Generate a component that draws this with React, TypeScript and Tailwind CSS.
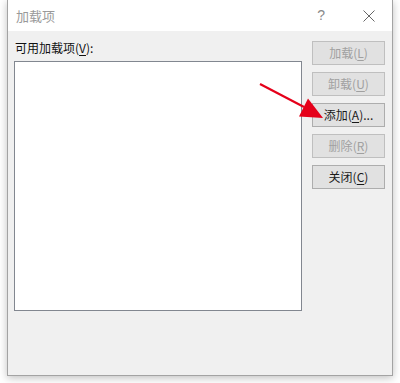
import React from 'react';

const font = { fontFamily: '"Microsoft YaHei", "Noto Sans CJK SC", "Noto Sans", sans-serif' };

const Btn = ({ label, k, rest = '', disabled = false }: { label: string; k: string; rest?: string; disabled?: boolean }) => (
  <button
    className={`h-[24px] w-[73px] border border-[#adadad] bg-[#e1e1e1] text-[12px] leading-none flex items-center justify-center ${disabled ? 'text-[#a0a0a0] border-[#bfbfbf]' : 'text-[#1a1a1a]'}`}
  >
    {label}(<span className="underline underline-offset-2">{k}</span>){rest}
  </button>
);

const App = () => {
  return (
    <div className="relative w-[400px] h-[383px] bg-white overflow-hidden" style={font}>
      <div className="ml-[7px] w-[386px] h-[376px] flex flex-col border-l border-r border-b border-[#a3a3a3] shadow-[0_2px_8px_rgba(0,0,0,0.25)]">
        {/* title bar */}
        <div className="h-[31px] bg-white flex items-center pl-[8px] pr-[17px]">
          <span className="text-[13px] text-[#999999]">加载项</span>
          <span className="ml-auto mr-[38px] text-[14px] text-[#8a8a8a]" style={{ fontFamily: '"Liberation Sans", sans-serif' }}>?</span>
          <svg width="12" height="12" viewBox="0 0 12 12" className="text-[#666]">
            <path d="M0.5 0.5 L11.5 11.5 M11.5 0.5 L0.5 11.5" stroke="currentColor" strokeWidth="1" fill="none" />
          </svg>
        </div>
        {/* body */}
        <div className="flex-1 bg-[#f0f0f0] flex pl-[6px]">
          <div className="flex flex-col">
            <div className="mt-[9px] h-[16px] leading-[16px] pl-[1px] text-[12px] text-[#111]">
              可用加载项(<span className="underline underline-offset-2">V</span>):
            </div>
            <div className="mt-[5px] w-[288px] h-[250px] bg-white border border-[#828790]" />
          </div>
          <div className="ml-[10px] mt-[10px] flex flex-col gap-[7px]">
            <Btn label="加载" k="L" disabled />
            <Btn label="卸载" k="U" disabled />
            <Btn label="添加" k="A" rest="..." />
            <Btn label="删除" k="R" disabled />
            <Btn label="关闭" k="C" />
          </div>
        </div>
      </div>
      {/* red arrow annotation */}
      <svg className="absolute left-0 top-0 pointer-events-none" width="400" height="383">
        <line x1="260" y1="84" x2="304" y2="107" stroke="#e5001a" strokeWidth="2.2" />
        <polygon points="323,118 308,98.5 299,116.5" fill="#e5001a" />
      </svg>
    </div>
  );
};

export default App;
